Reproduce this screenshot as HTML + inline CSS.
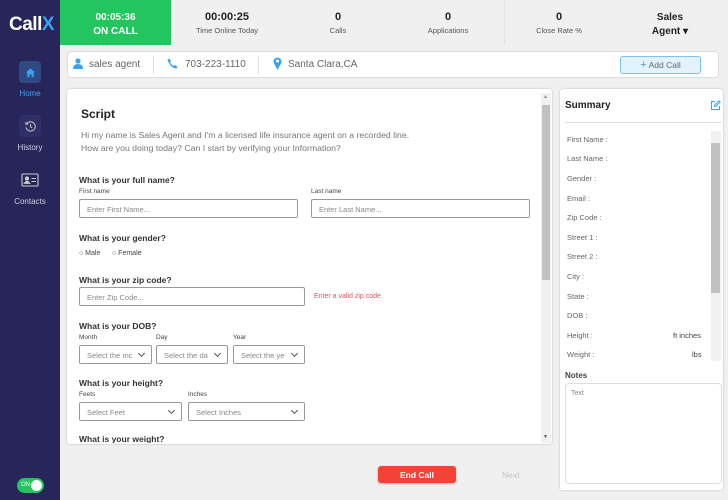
<!DOCTYPE html>
<html><head><style>
*{box-sizing:border-box;margin:0;padding:0}
body{width:728px;height:500px;overflow:hidden;background:#f0f0f0;font-family:"Liberation Sans",sans-serif;position:relative;color:#222}
.abs{position:absolute}
.side{left:0;top:0;width:60px;height:500px;background:#27255a}
.logo{left:9px;top:14px;color:#fff;font-weight:bold;font-size:19px;letter-spacing:-0.5px}
.nav{width:60px;text-align:center;font-size:8px;color:#cfd0e0}
.ib{width:22px;height:22px;border-radius:4px;margin:0 auto 6px;display:flex;align-items:center;justify-content:center}
.green{left:60px;top:0;width:111px;height:45px;background:#22c55e;color:#fff;text-align:center;font-weight:bold;font-size:10px;padding-top:11px;line-height:14px}
.stat{top:11px;text-align:center;font-size:11px;font-weight:bold}
.stat span{display:block;font-weight:normal;font-size:7.5px;color:#555;margin-top:3px}
.bar{left:67px;top:51px;width:652px;height:27px;background:#fff;border:1px solid #ddd;border-radius:4px;font-size:10px;color:#666}
.panel{background:#fff;border-radius:3px;box-shadow:0 0 2px #bbb}
.q{font-size:8.5px;font-weight:bold;color:#333;position:absolute;left:79px}
.lbl{font-size:6.5px;color:#444;position:absolute}
.inp{position:absolute;border:1px solid #999;border-radius:2px;height:19px;font-size:7.5px;color:#888;padding:5px 7px;background:#fff}
.sel::after{content:"";position:absolute;right:7px;top:5px;width:4px;height:4px;border-right:1.2px solid #555;border-bottom:1.2px solid #555;transform:rotate(45deg)}
.sl{position:absolute;left:567px;font-size:7.5px;color:#666}
</style></head><body>
<div class="abs side"></div>
<div class="abs logo">Call<span style="color:#3aa3f0">X</span></div>
<div class="abs nav" style="left:0;top:61px;color:#3aa3f0"><div class="ib" style="background:#2f4a83"><svg width="11" height="11" viewBox="0 0 12 12"><path d="M1 6L6 1.5 11 6H9.5V11H7.2V8H4.8V11H2.5V6Z" fill="#3aa3f0"/></svg></div>Home</div>
<div class="abs nav" style="left:0;top:115px"><div class="ib" style="background:#302e66"><svg width="13" height="13" viewBox="0 0 14 14" fill="none" stroke="#bbb" stroke-width="1.2"><path d="M3 4A5 5 0 1 1 2.2 8"/><path d="M2 2V4.5H4.5"/><path d="M7 4.5V7.3L8.8 8.5"/></svg></div>History</div>
<div class="abs nav" style="left:0;top:169px"><div class="ib"><svg width="18" height="14" viewBox="0 0 18 14" fill="none" stroke="#ccc" stroke-width="1.1"><rect x="1" y="1" width="16" height="12" rx="1"/><circle cx="6" cy="5.5" r="1.6" fill="#ccc"/><path d="M3.3 10.3Q6 6.5 8.7 10.3Z" fill="#ccc"/><path d="M10.5 5.5H15M10.5 8.5H15"/></svg></div>Contacts</div>
<div class="abs" style="left:17px;top:478px;width:27px;height:15px;border-radius:8px;background:#22c55e"><span style="position:absolute;left:4px;top:4px;font-size:6px;color:#fff">ON</span><div style="position:absolute;right:2px;top:2px;width:11px;height:11px;border-radius:50%;background:#fff"></div></div>

<div class="abs green">00:05:36<br>ON CALL</div>
<div class="abs stat" style="left:171px;width:112px">00:00:25<span>Time Online Today</span></div>
<div class="abs stat" style="left:288px;width:100px">0<span>Calls</span></div>
<div class="abs stat" style="left:398px;width:100px">0<span>Applications</span></div>
<div class="abs stat" style="left:509px;width:100px">0<span>Close Rate %</span></div>
<div class="abs" style="left:504px;top:0;width:1px;height:45px;background:#e4e4e4"></div>
<div class="abs" style="left:640px;top:11px;width:60px;text-align:center;font-size:10px;font-weight:bold;line-height:14px">Sales<br>Agent ▾</div>

<div class="abs bar">
<svg class="abs" style="left:5px;top:6px" width="10" height="11" viewBox="0 0 10 11"><circle cx="5" cy="3" r="2.6" fill="#3aa3f0"/><path d="M0 11Q0 6 5 6Q10 6 10 11Z" fill="#3aa3f0"/></svg>
<span class="abs" style="left:21px;top:7px">sales agent</span>
<div class="abs" style="left:85px;top:4px;width:1px;height:18px;background:#ddd"></div>
<svg class="abs" style="left:99px;top:6px" width="11" height="11" viewBox="0 0 11 11"><path d="M2 0.5L4 3 3 4.5Q4.5 7 6.5 8L8 7 10.5 9 9.5 10.5Q4 10.5 0.5 2Z" fill="#3aa3f0"/></svg>
<span class="abs" style="left:117px;top:7px">703-223-1110</span>
<div class="abs" style="left:190px;top:4px;width:1px;height:18px;background:#ddd"></div>
<svg class="abs" style="left:205px;top:5px" width="9" height="13" viewBox="0 0 9 13"><path d="M4.5 13L1 6.5A4 4 0 1 1 8 6.5Z" fill="#3aa3f0"/><circle cx="4.5" cy="4" r="1.5" fill="#fff"/></svg>
<span class="abs" style="left:220px;top:7px">Santa Clara,CA</span>
<div class="abs" style="left:552px;top:4px;width:81px;height:18px;background:#e2f3fd;border:1px solid #7cc3ee;border-radius:3px;font-size:8.5px;color:#666;text-align:center;padding-top:3px"><span style="color:#3aa3f0;font-size:11px;line-height:8px">+</span> Add Call</div>
</div>

<div class="abs panel" style="left:67px;top:89px;width:485px;height:355px"></div>
<div class="abs" style="left:541px;top:93px;width:10px;height:350px;background:#f1f1f1"></div>
<div class="abs" style="left:542px;top:105px;width:8px;height:175px;background:#c1c1c1"></div>
<div class="abs" style="left:543px;top:94px;font-size:5px;color:#888">▲</div>
<div class="abs" style="left:543px;top:434px;font-size:5px;color:#555">▼</div>
<div class="abs" style="left:81px;top:107px;font-size:12px;font-weight:bold">Script</div>
<div class="abs" style="left:81px;top:129px;font-size:8.7px;color:#777;line-height:12.5px">Hi my name is Sales Agent and I'm a licensed life insurance agent on a recorded line.<br>How are you doing today? Can I start by verifying your Information?</div>
<div class="q" style="top:175px">What is your full name?</div>
<div class="lbl" style="left:79px;top:188px">First name</div>
<div class="lbl" style="left:311px;top:188px">Last name</div>
<div class="inp" style="left:79px;top:199px;width:219px">Enter First Name...</div>
<div class="inp" style="left:311px;top:199px;width:219px">Enter Last Name...</div>
<div class="q" style="top:233px">What is your gender?</div>
<div class="abs" style="left:79px;top:250px;font-size:7px;color:#444">○ Male &nbsp;&nbsp;&nbsp;&nbsp;&nbsp;○ Female</div>
<div class="q" style="top:275px">What is your zip code?</div>
<div class="inp" style="left:79px;top:287px;width:226px">Enter Zip Code...</div>
<div class="abs" style="left:314px;top:293px;font-size:7px;color:#f0505a">Enter a valid zip code</div>
<div class="q" style="top:321px">What is your DOB?</div>
<div class="lbl" style="left:79px;top:334px">Month</div>
<div class="lbl" style="left:156px;top:334px">Day</div>
<div class="lbl" style="left:233px;top:334px">Year</div>
<div class="inp sel" style="left:79px;top:345px;width:73px">Select the mc</div>
<div class="inp sel" style="left:156px;top:345px;width:72px">Select the da</div>
<div class="inp sel" style="left:233px;top:345px;width:72px">Select the ye</div>
<div class="q" style="top:378px">What is your height?</div>
<div class="lbl" style="left:79px;top:391px">Feets</div>
<div class="lbl" style="left:188px;top:391px">Inches</div>
<div class="inp sel" style="left:79px;top:402px;width:103px">Select Feet</div>
<div class="inp sel" style="left:188px;top:402px;width:117px">Select Inches</div>
<div class="q" style="top:434px;height:9px;overflow:hidden">What is your weight?</div>

<div class="abs" style="left:378px;top:466px;width:78px;height:17px;background:#f44336;border-radius:3px;color:#fff;font-size:8.5px;font-weight:bold;text-align:center;padding-top:4px;box-shadow:0 1px 2px #aaa">End Call</div>
<div class="abs" style="left:502px;top:470px;font-size:8.5px;color:#c4c4c4">Next</div>

<div class="abs panel" style="left:560px;top:89px;width:163px;height:401px"></div>
<div class="abs" style="left:565px;top:100px;font-size:10px;font-weight:bold">Summary</div>
<svg class="abs" style="left:710px;top:100px" width="11" height="11" viewBox="0 0 11 11" fill="none" stroke="#3aa3f0" stroke-width="1"><path d="M5 1.5H1.5V9.5H9.5V6"/><path d="M4.5 6.5L4.8 5 9 0.8 10.2 2 6 6.2Z"/></svg>
<div class="abs" style="left:565px;top:122px;width:157px;height:1px;background:#e0e0e0"></div>
<div class="abs" style="left:711px;top:131px;width:10px;height:230px;background:#f1f1f1"></div>
<div class="abs" style="left:711px;top:143px;width:9px;height:150px;background:#c1c1c1"></div>
<div class="sl" style="top:135px">First Name :</div>
<div class="sl" style="top:154px">Last Name :</div>
<div class="sl" style="top:174px">Gender :</div>
<div class="sl" style="top:194px">Email :</div>
<div class="sl" style="top:213px">Zip Code :</div>
<div class="sl" style="top:233px">Street 1 :</div>
<div class="sl" style="top:252px">Street 2 :</div>
<div class="sl" style="top:272px">City :</div>
<div class="sl" style="top:292px">State :</div>
<div class="sl" style="top:311px">DOB :</div>
<div class="sl" style="top:331px">Height :</div>
<div class="sl" style="top:350px">Weight :</div>
<div class="abs" style="left:673px;top:331px;font-size:7.5px;color:#444">ft inches</div>
<div class="abs" style="left:692px;top:350px;font-size:7.5px;color:#444">lbs</div>
<div class="abs" style="left:565px;top:371px;font-size:8px;font-weight:bold;color:#444">Notes</div>
<div class="abs" style="left:565px;top:383px;width:157px;height:101px;border:1px solid #ddd;border-radius:4px;font-size:7px;color:#888;padding:6px 5px">Text</div>
</body></html>
